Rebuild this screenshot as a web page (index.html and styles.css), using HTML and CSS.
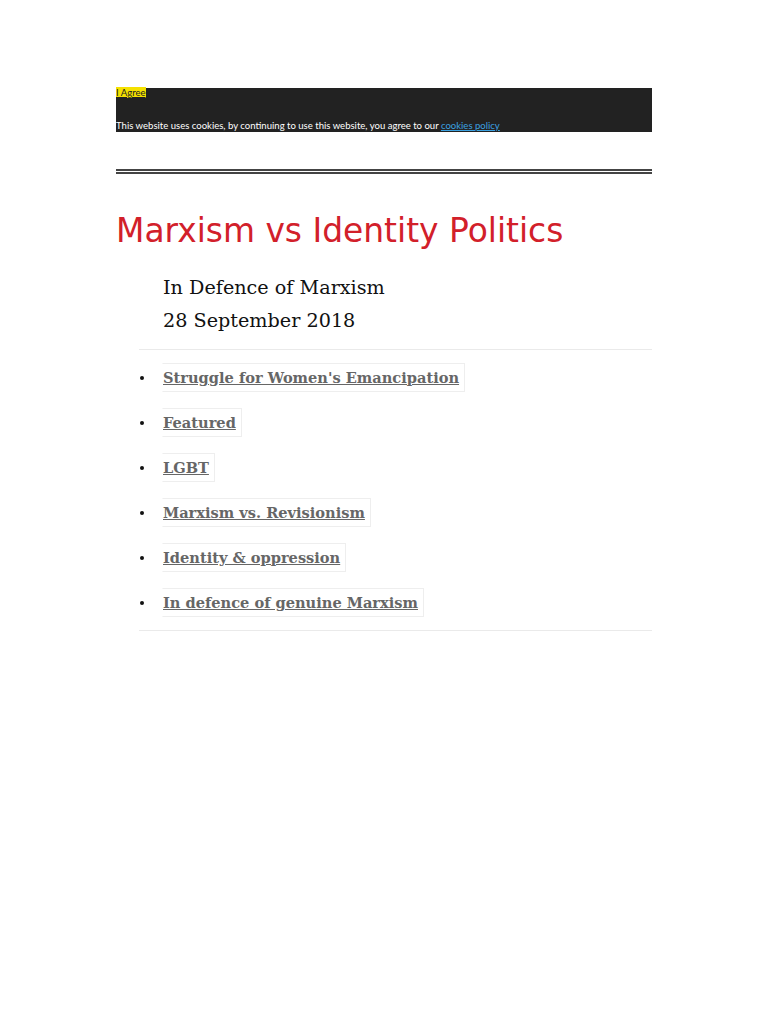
FILE: index.html
```html
<!DOCTYPE html>
<html>
<head>
<meta charset="utf-8">
<link rel="stylesheet" href="styles.css">
</head>
<body>
<div class="page">
  <div class="cookie">
    <div class="cookie-top"><a class="agree" href="#">I Agree</a></div>
    <p class="cookie-text">This website uses cookies, by continuing to use this website, you agree to our <a href="#">cookies policy</a></p>
  </div>
  <div class="rule"></div>
  <h1 class="title">Marxism vs Identity Politics</h1>
  <div class="byline">
    <div>In Defence of Marxism</div>
    <div>28 September 2018</div>
  </div>
  <div class="tags">
    <ul>
      <li><a href="#">Struggle for Women's Emancipation</a></li>
      <li><a href="#">Featured</a></li>
      <li><a href="#">LGBT</a></li>
      <li><a href="#">Marxism vs. Revisionism</a></li>
      <li><a href="#">Identity &amp; oppression</a></li>
      <li><a href="#">In defence of genuine Marxism</a></li>
    </ul>
  </div>
</div>
</body>
</html>
```

FILE: styles.css
```css
html, body {
  margin: 0;
  padding: 0;
  background: #fff;
}
.page {
  width: 536px;
  margin: 0 auto;
  padding-top: 88px;
}
.cookie {
  background: #222222;
  height: 44px;
  display: flex;
  flex-direction: column;
  justify-content: space-between;
  font-family: Lato, "Liberation Sans", sans-serif;
  font-size: 9.55px;
  line-height: 11px;
}
.cookie-top {
  display: flex;
}
.agree {
  background: #f5e100;
  color: #222;
  text-decoration: underline;
  margin-top: -1px;
}
.cookie-text {
  margin: 0 0 1px 0;
  color: #fff;
}
.cookie-text a {
  color: #3ba1e0;
}
.rule {
  margin-top: 37px;
  border-top: 2px solid #444;
  border-bottom: 2px solid #444;
  height: 1px;
  background: #fff;
}
.title {
  font-family: "DejaVu Sans", sans-serif;
  font-weight: normal;
  font-size: 32.9px;
  line-height: 40px;
  color: #d2202a;
  margin: 37px 0 0 0;
}
.byline {
  font-family: "DejaVu Serif", serif;
  font-size: 19.2px;
  line-height: 33px;
  color: #111;
  margin: 20px 0 0 47px;
}
.tags {
  margin: 12px 0 0 23px;
  border-top: 1px solid #eaeaea;
  border-bottom: 1px solid #eaeaea;
  padding: 13px 0 13px 0;
}
.tags ul {
  margin: 0;
  padding-left: 1px;
  list-style: none;
}
.tags li {
  display: flex;
  align-items: center;
  margin-bottom: 16px;
  line-height: 27px;
}
.tags li::before {
  content: "";
  width: 4px;
  height: 4px;
  border-radius: 50%;
  background: #111;
  margin-right: 18px;
  flex: none;
}
.tags li:last-child {
  margin-bottom: 0;
}
.tags a {
  display: inline-block;
  font-family: "DejaVu Serif", serif;
  font-weight: bold;
  font-size: 14.6px;
  color: #666;
  text-decoration: underline;
  border: 1px solid #eeeeee;
  border-left-color: transparent;
  padding: 0 5px 0 0;
}
```
